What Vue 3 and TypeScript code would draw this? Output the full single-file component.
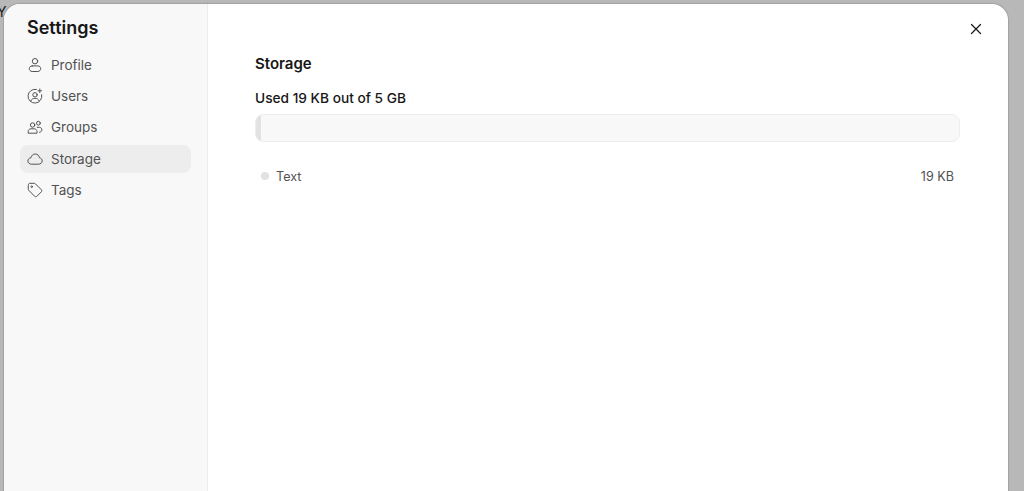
<script setup lang="ts">
const items = ['Profile', 'Users', 'Groups', 'Storage', 'Tags']
</script>

<template>
  <div class="page">
    <span class="behind">Y</span>
    <div class="modal">
      <aside class="side">
        <h1 class="title">Settings</h1>
        <nav class="nav">
          <a v-for="item in items" :key="item" class="item" :class="{ active: item === 'Storage' }">
            <svg class="icon" viewBox="0 0 16 16" fill="none" stroke="#525252" stroke-width="1" stroke-linecap="round" stroke-linejoin="round">
              <template v-if="item === 'Profile'">
                <circle cx="8" cy="4.2" r="2.7" />
                <path d="M5.2 8.9h5.6c1.7 0 2.9 1.2 2.9 2.7s-1.2 2.9-2.9 2.9H5.2c-1.7 0-2.9-1.3-2.9-2.9s1.2-2.7 2.9-2.7z" />
              </template>
              <template v-else-if="item === 'Users'">
                <path d="M9.4 1.4A6.9 6.9 0 1 0 14.7 6.700" />
                <circle cx="8" cy="6.8" r="2.2" />
                <path d="M3.700 13.100c.7-1.900 2.300-2.800 4.300-2.800s3.600.9 4.300 2.800" />
                <path d="M12.800 1v3.600M11 2.800h3.600" />
              </template>
              <template v-else-if="item === 'Groups'">
                <circle cx="5.600" cy="6" r="2.200" />
                <circle cx="11.400" cy="4.200" r="1.900" />
                <path d="M1.200 13.800v-1.300c0-1.600 1.200-2.700 2.700-2.700h3.300c1.500 0 2.800 1.100 2.800 2.700v1.300z" />
                <path d="M10.200 8.300h2.200c1.400 0 2.500 1.100 2.500 2.500 0 1.300-1 2.400-2.400 2.500" />
              </template>
              <path v-else-if="item === 'Storage'" d="M4.300 13.200C2.400 13.200.9 11.800.9 10s1.300-3 3-3.200C4.500 4.500 6 3 8.200 3c2.300 0 4 1.600 4.300 3.800 1.500.2 2.700 1.500 2.700 3.100 0 1.900-1.500 3.300-3.400 3.300z" />
              <template v-else>
                <path d="M1.300 2.900c0-.9.700-1.600 1.600-1.600h4.300c.4 0 .8.200 1.100.4l6 6c.6.600.6 1.600 0 2.200l-4.400 4.400c-.6.600-1.600.6-2.200 0l-6-6c-.3-.3-.4-.7-.4-1.100z" />
                <circle cx="4.700" cy="4.700" r=".8" />
              </template>
            </svg>
            <span>{{ item }}</span>
          </a>
        </nav>
      </aside>
      <main class="main">
        <button class="close" aria-label="Close">
          <svg viewBox="0 0 16 16" fill="none" stroke="#171717" stroke-width="1.200" stroke-linecap="round">
            <path d="M3.500 3.500l9 9M12.500 3.500l-9 9" />
          </svg>
        </button>
        <h2 class="heading">Storage</h2>
        <p class="used">Used 19 KB out of 5 GB</p>
        <div class="bar"><div class="fill"></div></div>
        <div class="row">
          <span class="dot"></span>
          <span class="label">Text</span>
          <span class="size">19 KB</span>
        </div>
      </main>
    </div>
  </div>
</template>

<style>
html, body { margin: 0; overflow: hidden; }
</style>

<style scoped>
.page {
  position: relative;
  box-sizing: border-box;
  width: 1024px;
  height: 491px;
  overflow: hidden;
  padding: 4px 16px 0 4px;
  background: #b8b8b8;
  font-family: Inter, "Liberation Sans", sans-serif;
}
.behind {
  position: absolute;
  left: -3px;
  top: 3px;
  font-size: 14px;
  color: #222;
}
.modal {
  position: relative;
  display: flex;
  height: 487px;
  background: #fff;
  border-radius: 16px 16px 0 0;
  box-shadow: 0 0 1px 1px rgba(0, 0, 0, 0.12);
  overflow: hidden;
}
.side {
  box-sizing: border-box;
  width: 204px;
  padding: 0 16px;
  background: #f8f8f8;
  border-right: 1px solid #ededed;
}
.title {
  margin: 13px 0 0 7px;
  font-size: 18px;
  line-height: 22px;
  font-weight: 600;
  color: #171717;
}
.nav {
  display: flex;
  flex-direction: column;
  gap: 4px;
  margin-top: 12px;
}
.item {
  display: flex;
  align-items: center;
  gap: 8px;
  height: 27.400px;
  padding: 0 7px;
  border-radius: 8px;
  font-size: 13.500px;
  color: #525252;
}
.item.active {
  background: #ededed;
}
.icon {
  width: 16px;
  height: 16px;
  flex: none;
}
.main {
  position: relative;
  flex: 1;
  box-sizing: border-box;
  padding: 50px 48px 0 47px;
}
.close {
  position: absolute;
  top: 17px;
  right: 24px;
  width: 16px;
  height: 16px;
  padding: 0;
  border: 0;
  background: none;
}
.close svg {
  display: block;
  width: 16px;
  height: 16px;
}
.heading {
  margin: 0;
  font-size: 15px;
  line-height: 20px;
  font-weight: 600;
  color: #171717;
}
.used {
  margin: 14px 0 0;
  font-size: 13.700px;
  line-height: 20px;
  font-weight: 450;
  color: #171717;
}
.bar {
  box-sizing: border-box;
  height: 28px;
  margin-top: 6px;
  background: #f8f8f8;
  border: 1px solid #ededed;
  border-radius: 8px;
  overflow: hidden;
}
.fill {
  width: 5px;
  height: 100%;
  background: #e2e2e2;
}
.row {
  display: flex;
  align-items: center;
  height: 20px;
  margin-top: 24px;
  padding: 0 6px;
  font-size: 12.600px;
  color: #525252;
}
.dot {
  width: 8px;
  height: 8px;
  border-radius: 50%;
  background: #e2e2e2;
}
.label {
  margin-left: 7px;
}
.size {
  margin-left: auto;
}
</style>
